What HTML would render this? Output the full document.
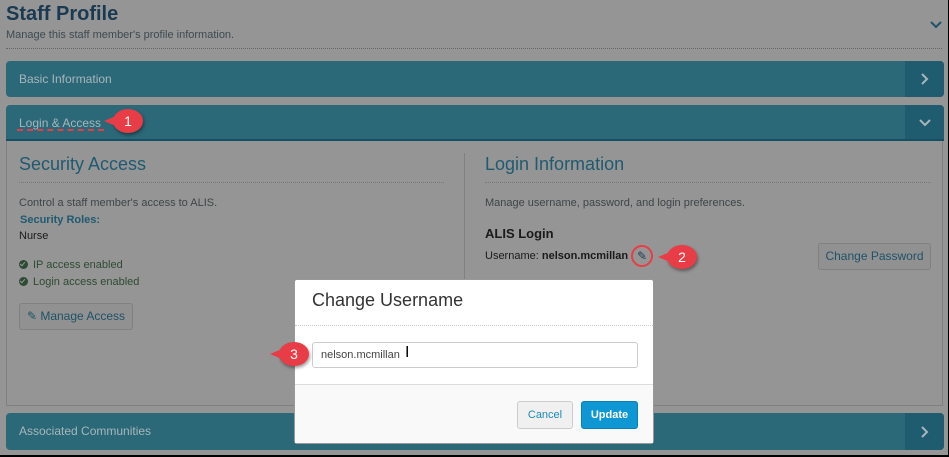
<!DOCTYPE html>
<html><head><style>
*{box-sizing:border-box;margin:0;padding:0}
body{width:949px;height:457px;overflow:hidden;background:#000;font-family:"Liberation Sans",sans-serif;position:relative}
.pg{position:absolute;left:0;top:0;width:948px;height:455px;background:#959595}
.a{position:absolute}
.bar{position:absolute;left:6px;width:938px;background:#2b6878;border-radius:4px;color:#a7b6bb;font-size:12px;padding-left:13px;overflow:hidden}
.bar .ch{position:absolute;right:0;top:0;bottom:0;width:39px;background:#1f5c70}
.btn{position:absolute;border:1px solid #808080;border-radius:3px;background:#919191;color:#1f5268;font-size:12px;text-align:center}
.badge{position:absolute;width:30px;height:24px;background:#e83d46;border-radius:50%;color:#fff;font-size:14px;text-align:center;line-height:24px;box-shadow:1px 2px 3px rgba(0,0,0,.4)}
.badge:before{content:"";position:absolute;left:-9px;top:7px;border-top:5px solid transparent;border-bottom:5px solid transparent;border-right:12px solid #e83d46}
.ok{display:inline-block;width:9px;height:9px;border-radius:50%;background:#2e4a33;margin-right:5px;vertical-align:-1px;position:relative}
.ok:after{content:"";position:absolute;left:2px;top:1px;width:2px;height:4px;border:solid #959595;border-width:0 1.5px 1.5px 0;transform:rotate(40deg)}
</style></head><body>
<div class="pg">
<div class="a" style="left:6px;top:3px;font-size:20px;font-weight:bold;color:#1a3a52">Staff Profile</div>
<div class="a" style="left:6px;top:29px;font-size:11px;color:#3d4a52">Manage this staff member's profile information.</div>
<svg class="a" style="left:929px;top:20px" width="14" height="10"><path d="M2 2l5 5 5-5" stroke="#1f5268" stroke-width="2" fill="none"/></svg>
<div class="a" style="left:6px;top:48px;width:936px;border-top:1px dotted #666"></div>

<div class="bar" style="top:61px;height:36px;line-height:36px">Basic Information<div class="ch"><svg style="position:absolute;left:15px;top:12px" width="10" height="12"><path d="M2 1l5 5-5 5" stroke="#a7b6bb" stroke-width="2" fill="none"/></svg></div></div>
<div class="bar" style="top:105px;height:36px;line-height:36px;border-radius:4px 4px 0 0;border-bottom:2px solid #164f63">Login &amp; Access<div class="ch"><svg style="position:absolute;left:13px;top:13px" width="14" height="10"><path d="M2 2l5 5 5-5" stroke="#a7b6bb" stroke-width="2" fill="none"/></svg></div></div>
<div class="a" style="left:17px;top:129px;width:87px;border-top:2px dashed #e83d46"></div>
<div class="badge" style="left:113px;top:109px">1</div>

<div class="a" style="left:6px;top:141px;width:937px;height:265px;border:1px solid #808080;border-top:none"></div>
<div class="a" style="left:464px;top:153px;height:250px;border-left:1px solid #808080"></div>

<div class="a" style="left:19px;top:154px;font-size:18px;color:#1f5a70">Security Access</div>
<div class="a" style="left:19px;top:182px;width:425px;border-top:1px dotted #777"></div>
<div class="a" style="left:19px;top:197px;font-size:11px;color:#3d4548">Control a staff member's access to ALIS.</div>
<div class="a" style="left:20px;top:214px;font-size:11px;font-weight:bold;color:#1f5a70">Security Roles:</div>
<div class="a" style="left:19px;top:230px;font-size:11px;color:#1a1a1a">Nurse</div>
<div class="a" style="left:19px;top:259px;font-size:11px;color:#2e4a33"><span class="ok"></span>IP access enabled</div>
<div class="a" style="left:19px;top:276px;font-size:11px;color:#2e4a33"><span class="ok"></span>Login access enabled</div>
<div class="btn" style="left:19px;top:303px;width:114px;height:27px;line-height:25px">✎ Manage Access</div>

<div class="a" style="left:485px;top:154px;font-size:18px;color:#1f5a70">Login Information</div>
<div class="a" style="left:485px;top:182px;width:446px;border-top:1px dotted #777"></div>
<div class="a" style="left:485px;top:197px;font-size:11px;color:#3d4548">Manage username, password, and login preferences.</div>
<div class="a" style="left:485px;top:226px;font-size:13px;font-weight:bold;color:#1a1a1a">ALIS Login</div>
<div class="a" style="left:485px;top:250px;font-size:11px;color:#1a1a1a">Username: <b>nelson.mcmillan</b></div>
<div class="a" style="left:631px;top:245px;width:22px;height:22px;border:2px solid #e83d46;border-radius:50%;color:#1f3a52;font-size:12px;text-align:center;line-height:18px">✎</div>
<div class="badge" style="left:667px;top:245px">2</div>
<div class="btn" style="left:818px;top:243px;width:113px;height:27px;line-height:25px">Change Password</div>

<div class="bar" style="top:413px;height:37px;line-height:37px">Associated Communities<div class="ch"><svg style="position:absolute;left:15px;top:13px" width="10" height="12"><path d="M2 1l5 5-5 5" stroke="#a7b6bb" stroke-width="2" fill="none"/></svg></div></div>

<div class="a" style="left:294px;top:279px;width:360px;height:165px;background:#fff;border-radius:3px;border:1px solid #999">
 <div class="a" style="left:17px;top:10px;font-size:18px;color:#333">Change Username</div>
 <div class="a" style="left:0;top:45px;width:358px;border-top:1px dotted #ccc"></div>
 <div class="a" style="left:17px;top:62px;width:326px;height:26px;border:1px solid #ccc;border-radius:3px;font-size:11px;color:#444;padding:6px 8px">nelson.mcmillan</div>
 <div class="a" style="left:110px;top:64px;font-size:16px;color:#000">I</div>
 <div class="a" style="left:0;top:104px;width:358px;height:59px;border-top:1px solid #ddd;background:#f9f9f9"></div>
 <div class="a" style="left:222px;top:121px;width:56px;height:28px;border:1px solid #ccc;border-radius:3px;background:#f0f0f0;color:#1d8ab8;font-size:11px;text-align:center;line-height:26px">Cancel</div>
 <div class="a" style="left:286px;top:121px;width:57px;height:28px;border-radius:3px;background:#0e97d2;border:1px solid #0a7fb3;color:#fff;font-weight:bold;font-size:11px;text-align:center;line-height:26px">Update</div>
</div>
<div class="badge" style="left:279px;top:342px">3</div>
</div>
</body></html>
